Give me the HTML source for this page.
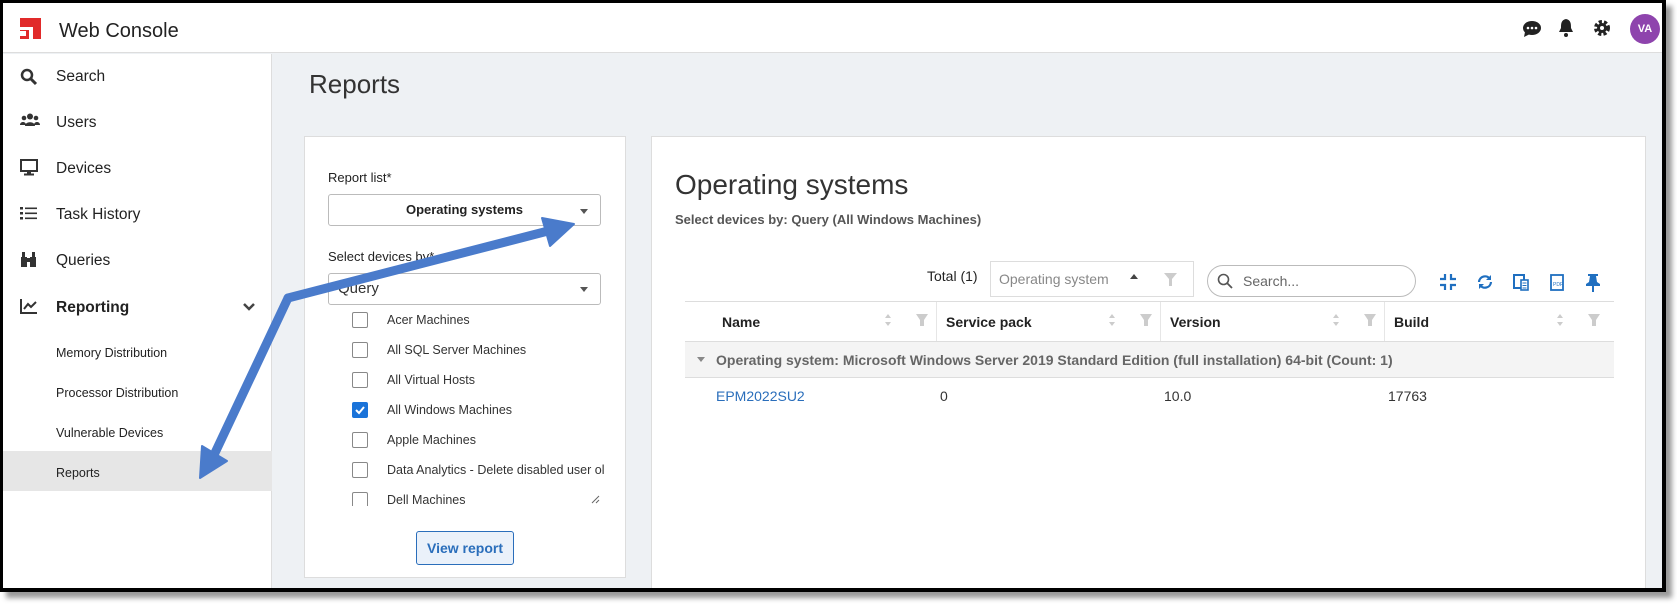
<!DOCTYPE html>
<html><head><meta charset="utf-8"><style>
*{box-sizing:border-box;margin:0;padding:0}
body{width:1677px;height:607px;background:#fff;font-family:"Liberation Sans",sans-serif;position:relative;overflow:hidden;color:#222}
.abs{position:absolute}
#frame{left:0;top:0;width:1666px;height:592px;border:3px solid #000;border-right-width:4px;border-bottom-width:4px;background:#eef1f4;overflow:hidden;box-shadow:6px 6px 5px #999}
.nav{position:absolute;left:53px;font-size:15.5px;color:#222}
.sub{position:absolute;left:53px;font-size:12.5px;color:#222}
.ic{position:absolute;left:17px}
.cb{position:absolute;left:349px;width:16px;height:16px;border:1px solid #888;border-radius:2px;background:#fff}
.cbl{position:absolute;left:384px;font-size:12.5px;color:#333}
.th{position:absolute;top:311px;font-size:14px;color:#222;font-weight:bold}
.tool{position:absolute;top:271px}
</style></head><body>
<div id="frame" class="abs">
 <div class="abs" style="left:0;top:0;width:1662px;height:50px;background:#fff;border-bottom:1px solid #ddd"></div>
 <div class="abs" style="left:17px;top:15px;width:21px;height:21px;background:#e12a2a"></div>
 <div class="abs" style="left:17px;top:28px;width:6px;height:5px;background:#fff"></div>
 <div class="abs" style="left:17px;top:24px;width:13px;height:3px;background:#fff"></div>
 <div class="abs" style="left:26px;top:24px;width:4px;height:12px;background:#fff"></div>
 <div class="abs" style="left:56px;top:17px;font-size:20px;color:#222">Web Console</div>
 <svg class="abs" style="left:1519px;top:17px" width="20" height="18" viewBox="0 0 20 18"><ellipse cx="10" cy="8" rx="9" ry="7" fill="#222"/><path d="M3 12 L2 17 L8 14z" fill="#222"/><circle cx="6" cy="8" r="1.3" fill="#fff"/><circle cx="10" cy="8" r="1.3" fill="#fff"/><circle cx="14" cy="8" r="1.3" fill="#fff"/></svg>
 <svg class="abs" style="left:1555px;top:15px" width="16" height="20" viewBox="0 0 16 20"><path d="M8 1 C3 2 3 6 3 10 L1 14 H15 L13 10 C13 6 13 2 8 1z" fill="#222"/><circle cx="8" cy="17" r="2" fill="#222"/></svg>
 <svg class="abs" style="left:1590px;top:16px" width="18" height="18" viewBox="0 0 18 18"><circle cx="9" cy="9" r="6" fill="none" stroke="#222" stroke-width="4" stroke-dasharray="3 2"/><circle cx="9" cy="9" r="5" fill="#222"/><circle cx="9" cy="9" r="2" fill="#fff"/></svg>
 <div class="abs" style="left:1627px;top:11px;width:30px;height:30px;border-radius:50%;background:#8e44ad;color:#fff;font-size:11px;font-weight:bold;text-align:center;line-height:30px">VA</div>
 <div class="abs" style="left:0;top:51px;width:269px;height:560px;background:#fff;border-right:1px solid #ddd"></div>
 <div class="abs" style="left:0;top:448px;width:269px;height:40px;background:#e6e6e6"></div>
 <svg class="ic" style="top:65px" width="18" height="18" viewBox="0 0 18 18"><circle cx="7" cy="7" r="5" fill="none" stroke="#333" stroke-width="2.5"/><path d="M11 11 L16 16" stroke="#333" stroke-width="3"/></svg>
 <div class="nav" style="top:65px">Search</div>
 <svg class="ic" style="top:110px" width="20" height="14" viewBox="0 0 20 14"><circle cx="10" cy="3.5" r="3" fill="#333"/><circle cx="4" cy="5" r="2.3" fill="#333"/><circle cx="16" cy="5" r="2.3" fill="#333"/><path d="M5 13 C5 8 15 8 15 13z M0 12 C0 8 6 8 6 12z M14 12 C14 8 20 8 20 12z" fill="#333"/></svg>
 <div class="nav" style="top:111px">Users</div>
 <svg class="ic" style="top:156px" width="18" height="17" viewBox="0 0 18 17"><rect x="1" y="1" width="16" height="11" fill="none" stroke="#333" stroke-width="2"/><rect x="7" y="12" width="4" height="3" fill="#333"/><rect x="4" y="14.5" width="10" height="2" fill="#333"/></svg>
 <div class="nav" style="top:157px">Devices</div>
 <svg class="ic" style="top:203px" width="18" height="15" viewBox="0 0 18 15"><rect x="0" y="1" width="3" height="2.5" fill="#333"/><rect x="0" y="6" width="3" height="2.5" fill="#333"/><rect x="0" y="11" width="3" height="2.5" fill="#333"/><rect x="5" y="1.5" width="12" height="1.6" fill="#333"/><rect x="5" y="6.5" width="12" height="1.6" fill="#333"/><rect x="5" y="11.5" width="12" height="1.6" fill="#333"/></svg>
 <div class="nav" style="top:203px">Task History</div>
 <svg class="ic" style="top:249px" width="17" height="16" viewBox="0 0 17 16"><rect x="1" y="5" width="6" height="10" fill="#333"/><rect x="10" y="5" width="6" height="10" fill="#333"/><rect x="2" y="0" width="3" height="5" fill="#333"/><rect x="12" y="0" width="3" height="5" fill="#333"/><rect x="6" y="6" width="5" height="4" fill="#333"/></svg>
 <div class="nav" style="top:249px">Queries</div>
 <svg class="ic" style="top:296px" width="18" height="15" viewBox="0 0 18 15"><path d="M1 0 V14 H17" fill="none" stroke="#333" stroke-width="2"/><path d="M4 10 L8 5 L11 8 L16 3" fill="none" stroke="#333" stroke-width="2"/></svg>
 <div class="nav" style="top:296px;font-weight:bold">Reporting</div>
 <svg class="abs" style="left:240px;top:300px" width="12" height="8" viewBox="0 0 12 8"><path d="M1 1 L6 6 L11 1" fill="none" stroke="#444" stroke-width="2.5"/></svg>
 <div class="sub" style="top:343px">Memory Distribution</div>
 <div class="sub" style="top:383px">Processor Distribution</div>
 <div class="sub" style="top:423px">Vulnerable Devices</div>
 <div class="sub" style="top:463px">Reports</div>
 <div class="abs" style="left:306px;top:66px;font-size:26px;color:#333;font-weight:300">Reports</div>
 <div class="abs" style="left:301px;top:133px;width:322px;height:442px;background:#fff;border:1px solid #ddd"></div>
 <div class="abs" style="left:325px;top:167px;font-size:13px;color:#222">Report list*</div>
 <div class="abs" style="left:325px;top:191px;width:273px;height:32px;border:1px solid #bbb;border-radius:3px;font-size:13px;font-weight:bold;text-align:center;line-height:30px">Operating systems</div>
 <div class="abs" style="left:577px;top:206px;border:4px solid transparent;border-top:5px solid #555"></div>
 <div class="abs" style="left:325px;top:246px;font-size:13px;color:#222">Select devices by*</div>
 <div class="abs" style="left:325px;top:270px;width:273px;height:32px;border:1px solid #bbb;border-radius:3px;font-size:15px;padding-left:9px;line-height:30px;color:#333">Query</div>
 <div class="abs" style="left:577px;top:284px;border:4px solid transparent;border-top:5px solid #555"></div>
 <div class="cb" style="top:309px"></div><div class="cbl" style="top:310px">Acer Machines</div>
 <div class="cb" style="top:339px"></div><div class="cbl" style="top:340px">All SQL Server Machines</div>
 <div class="cb" style="top:369px"></div><div class="cbl" style="top:370px">All Virtual Hosts</div>
 <div class="cb" style="top:399px;background:#1a73d9;border-color:#1a73d9"><svg width="14" height="14" viewBox="0 0 14 14" style="position:absolute;left:0;top:0"><path d="M3 7 L6 10 L11 4" fill="none" stroke="#fff" stroke-width="2"/></svg></div><div class="cbl" style="top:400px">All Windows Machines</div>
 <div class="cb" style="top:429px"></div><div class="cbl" style="top:430px">Apple Machines</div>
 <div class="cb" style="top:459px"></div><div class="cbl" style="top:460px">Data Analytics - Delete disabled user ol</div>
 <div class="abs" style="left:340px;top:489px;width:260px;height:14px;overflow:hidden"><div class="cb" style="left:9px;top:0"></div><div class="cbl" style="left:44px;top:1px">Dell Machines</div></div>
 <svg class="abs" style="left:588px;top:492px" width="9" height="9"><path d="M1 8 L8 1 M5 8 L8 5" stroke="#666" stroke-width="1"/></svg>
 <div class="abs" style="left:413px;top:528px;width:98px;height:34px;border:1px solid #2a6ebb;border-radius:3px;background:#eaf1fa;color:#2a6ebb;font-size:14px;font-weight:bold;text-align:center;line-height:32px">View report</div>
 <div class="abs" style="left:648px;top:133px;width:995px;height:470px;background:#fff;border:1px solid #ddd"></div>
 <div class="abs" style="left:672px;top:166px;font-size:28px;color:#333;font-weight:300">Operating systems</div>
 <div class="abs" style="left:672px;top:209px;font-size:13px;color:#555;font-weight:bold">Select devices by: Query (All Windows Machines)</div>
 <div class="abs" style="left:924px;top:265px;font-size:14px;color:#222">Total (1)</div>
 <div class="abs" style="left:987px;top:258px;width:204px;height:36px;border:1px solid #ddd;font-size:14px;color:#888;padding-left:8px;line-height:34px">Operating system</div>
 <div class="abs" style="left:1127px;top:271px;border:4px solid transparent;border-bottom:5px solid #444;border-top:0"></div>
 <svg class="abs" style="left:1161px;top:270px" width="13" height="13" viewBox="0 0 13 13"><path d="M0 0 H13 L8 6 V13 H5 V6z" fill="#ccc"/></svg>
 <div class="abs" style="left:1204px;top:262px;width:209px;height:32px;border:1px solid #bbb;border-radius:16px;font-size:14px;color:#666;padding-left:35px;line-height:30px">Search...</div>
 <svg class="abs" style="left:1214px;top:270px" width="16" height="16" viewBox="0 0 16 16"><circle cx="6.5" cy="6.5" r="5" fill="none" stroke="#555" stroke-width="1.6"/><path d="M10 10 L15 15" stroke="#555" stroke-width="1.8"/></svg>
 <svg class="tool" style="left:1437px" width="16" height="16" viewBox="0 0 16 16"><path d="M5 0 V5 H0 M11 0 V5 H16 M5 16 V11 H0 M11 16 V11 H16" fill="none" stroke="#1f6fc0" stroke-width="2.2"/></svg>
 <svg class="tool" style="left:1474px" width="16" height="16" viewBox="0 0 16 16"><path d="M2 8 A6 6 0 0 1 13 5 M14 8 A6 6 0 0 1 3 11" fill="none" stroke="#1f6fc0" stroke-width="2.2"/><path d="M14 1 V6 H9z M2 15 V10 H7z" fill="#1f6fc0"/></svg>
 <svg class="tool" style="left:1510px" width="16" height="17" viewBox="0 0 16 17"><rect x="1" y="1" width="10" height="13" fill="none" stroke="#1f6fc0" stroke-width="2"/><rect x="8" y="6" width="7" height="10" fill="#fff" stroke="#1f6fc0" stroke-width="1.6"/><path d="M9.5 9 H13.5 M9.5 11.5 H13.5 M9.5 14 H13.5" stroke="#1f6fc0"/></svg>
 <svg class="tool" style="left:1547px" width="16" height="17" viewBox="0 0 16 17"><rect x="1" y="1" width="12" height="15" fill="none" stroke="#1f6fc0" stroke-width="1.8"/><text x="3" y="12" font-size="5" fill="#1f6fc0" font-family="Liberation Sans">PDF</text></svg>
 <svg class="tool" style="left:1582px" width="16" height="18" viewBox="0 0 16 18"><path d="M3 0 H13 V2 H11 L12 8 L15 10 V12 H1 V10 L4 8 L5 2 H3z" fill="#1f6fc0"/><rect x="7" y="12" width="2" height="6" fill="#1f6fc0"/></svg>
 <div class="abs" style="left:682px;top:298px;width:929px;height:1px;background:#ddd"></div>
 <div class="abs" style="left:933px;top:299px;width:1px;height:39px;background:#e6e6e6"></div>
 <div class="abs" style="left:1157px;top:299px;width:1px;height:39px;background:#e6e6e6"></div>
 <div class="abs" style="left:1381px;top:299px;width:1px;height:39px;background:#e6e6e6"></div>
 <div class="th" style="left:719px">Name</div>
 <div class="th" style="left:943px">Service pack</div>
 <div class="th" style="left:1167px">Version</div>
 <div class="th" style="left:1391px">Build</div>
 <div class="abs" style="left:682px;top:338px;width:929px;height:37px;background:#f4f4f4;border-top:1px solid #ddd;border-bottom:1px solid #ddd"></div>
 <div class="abs" style="left:694px;top:354px;border:4px solid transparent;border-top:5px solid #888"></div>
 <div class="abs" style="left:713px;top:349px;font-size:14px;color:#666;font-weight:bold">Operating system: Microsoft Windows Server 2019 Standard Edition (full installation) 64-bit (Count: 1)</div>
 <div class="abs" style="left:713px;top:385px;font-size:14px;color:#2a6ebb">EPM2022SU2</div>
 <div class="abs" style="left:937px;top:385px;font-size:14px;color:#333">0</div>
 <div class="abs" style="left:1161px;top:385px;font-size:14px;color:#333">10.0</div>
 <div class="abs" style="left:1385px;top:385px;font-size:14px;color:#333">17763</div>
</div>
<svg class="abs" style="left:0;top:0;z-index:5" width="1677" height="607">
 <defs><g id="s"><path d="M-3 -2 L0 -6 L3 -2z M-3 2 L0 6 L3 2z" fill="#ccc"/></g><path id="f" d="M-6 -6 H6 L2 0 V6 H-2 V0z" fill="#ccc"/></defs>
 <use href="#s" x="888" y="320"/><use href="#f" x="922" y="320"/>
 <use href="#s" x="1112" y="320"/><use href="#f" x="1146" y="320"/>
 <use href="#s" x="1336" y="320"/><use href="#f" x="1370" y="320"/>
 <use href="#s" x="1560" y="320"/><use href="#f" x="1594" y="320"/>
 <g fill="#4a7bcb" stroke="#4a7bcb" stroke-linejoin="round">
  <path d="M288 298 L548 231" stroke-width="9" fill="none" stroke-linecap="round"/>
  <path d="M574 224 L542 218 L550 246z" stroke-width="2"/>
  <path d="M288 298 L214 455" stroke-width="9" fill="none" stroke-linecap="round"/>
  <path d="M200 478 L202 446 L227 461z" stroke-width="2"/>
 </g>
</svg>
</body></html>
